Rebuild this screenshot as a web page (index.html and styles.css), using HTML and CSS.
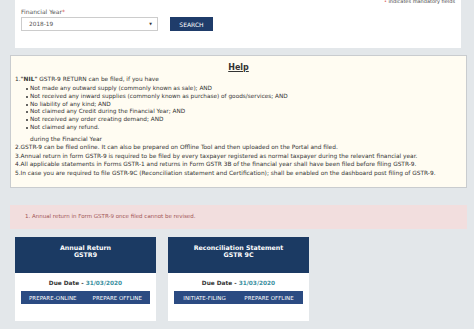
FILE: index.html
```html
<!DOCTYPE html>
<html>
<head>
<meta charset="utf-8">
<link rel="stylesheet" href="styles.css">
</head>
<body>
<div class="top">
  <div class="mandatory"><span class="star">•</span> indicates mandatory fields</div>
  <div class="label">Financial Year<span class="req">*</span></div>
  <div class="row">
    <div class="select"><span>2018-19</span><span class="caret">▼</span></div>
    <div class="btn">SEARCH</div>
  </div>
</div>
<div class="help">
  <div class="help-title">Help</div>
  <div class="line">1.<b>"NIL"</b> GSTR-9 RETURN can be filed, if you have</div>
  <ul>
    <li>Not made any outward supply (commonly known as sale); AND</li>
    <li>Not received any inward supplies (commonly known as purchase) of goods/services; AND</li>
    <li>No liability of any kind; AND</li>
    <li>Not claimed any Credit during the Financial Year; AND</li>
    <li>Not received any order creating demand; AND</li>
    <li>Not claimed any refund.</li>
  </ul>
  <div class="line during">during the Financial Year</div>
  <div class="points">
    <div class="line">2.GSTR-9 can be filed online. It can also be prepared on Offline Tool and then uploaded on the Portal and filed.</div>
    <div class="line">3.Annual return in form GSTR-9 is required to be filed by every taxpayer registered as normal taxpayer during the relevant financial year.</div>
    <div class="line">4.All applicable statements in Forms GSTR-1 and returns in Form GSTR 3B of the financial year shall have been filed before filing GSTR-9.</div>
    <div class="line">5.In case you are required to file GSTR-9C (Reconciliation statement and Certification); shall be enabled on the dashboard post filing of GSTR-9.</div>
  </div>
</div>
<div class="alert">1. Annual return in Form GSTR-9 once filed cannot be revised.</div>
<div class="cards">
  <div class="card">
    <div class="card-head">Annual Return<br>GSTR9</div>
    <div class="card-body">
      <div class="due">Due Date - <span class="date">31/03/2020</span></div>
      <div class="actions"><span>PREPARE-ONLINE</span><span>PREPARE OFFLINE</span></div>
    </div>
  </div>
  <div class="card">
    <div class="card-head">Reconciliation Statement<br>GSTR 9C</div>
    <div class="card-body">
      <div class="due">Due Date - <span class="date">31/03/2020</span></div>
      <div class="actions"><span>INITIATE-FILING</span><span>PREPARE OFFLINE</span></div>
    </div>
  </div>
</div>
</body>
</html>
```
FILE: styles.css
```css
html, body { margin: 0; padding: 0; }
body {
  background: #e3e7ea;
  font-family: "DejaVu Sans", Verdana, sans-serif;
  color: #333;
  width: 474px;
  height: 329px;
  overflow: hidden;
}
.top {
  background: #fff;
  margin: 0 13px 0 15px;
  height: 48px;
  padding: 0 0 0 6px;
  box-sizing: border-box;
  position: relative;
}
.mandatory {
  position: absolute;
  right: 6px;
  top: -2px;
  font-size: 5px;
  line-height: 6px;
  color: #444;
}
.star { color: #d9534f; }
.label {
  font-size: 6px;
  line-height: 8px;
  color: #555;
  padding-top: 8px;
  height: 9px;
}
.req { color: #d9534f; }
.row { display: flex; gap: 12px; }
.select {
  width: 137px;
  height: 14px;
  box-sizing: border-box;
  border: 1px solid #ccc;
  display: flex;
  align-items: center;
  justify-content: space-between;
  padding: 0 5px 0 7px;
  font-size: 5.8px;
  color: #555;
}
.caret { font-size: 3.5px; color: #333; }
.btn {
  width: 43px;
  height: 14px;
  background: #1f3c6a;
  color: #fff;
  font-size: 6px;
  display: flex;
  align-items: center;
  justify-content: center;
}
.help {
  margin: 7px 7px 0 10px;
  background: #fffcf2;
  border: 1px solid #c9cccf;
  height: 133px;
  box-sizing: border-box;
  padding: 7px 0 0 4px;
  font-size: 5.85px;
  color: #333;
  line-height: 8px;
}
.help-title {
  text-align: center;
  font-weight: bold;
  text-decoration: underline;
  font-size: 8px;
  line-height: 10px;
  margin-bottom: 2px;
  padding-right: 4px;
}
.help ul { margin: 2px 0 0; padding-left: 15px; list-style: none; }
.help li { line-height: 7.8px; position: relative; font-size: 5.75px; }
.help li::before {
  content: "";
  position: absolute;
  left: -4px;
  top: 3px;
  width: 2px;
  height: 2px;
  border-radius: 50%;
  background: #333;
}
.during { padding-left: 15px; margin-top: 3.5px; }
.points .line { line-height: 8.4px; }
.alert {
  margin: 17px 7px 0 10px;
  background: #f2dede;
  height: 24px;
  box-sizing: border-box;
  padding: 7px 0 0 15px;
  font-size: 5.5px;
  line-height: 8px;
  color: #a25757;
}
.cards {
  display: flex;
  gap: 12px;
  margin: 8px 0 0 15px;
}
.card {
  width: 141px;
  height: 84px;
  background: #fff;
}
.card-head {
  background: #1b3a63;
  color: #fff;
  font-weight: bold;
  text-align: center;
  font-size: 6.3px;
  line-height: 7px;
  height: 36px;
  box-sizing: border-box;
  padding-top: 7px;
}
.card-body { padding: 6px 6px 0; }
.due {
  text-align: center;
  font-weight: bold;
  font-size: 5.8px;
  color: #333;
  line-height: 8px;
}
.date { color: #3a8fa0; }
.actions {
  margin-top: 4px;
  height: 13px;
  background: #2b4b82;
  color: #fff;
  font-size: 5.5px;
  display: flex;
  align-items: center;
  justify-content: space-around;
}
```
